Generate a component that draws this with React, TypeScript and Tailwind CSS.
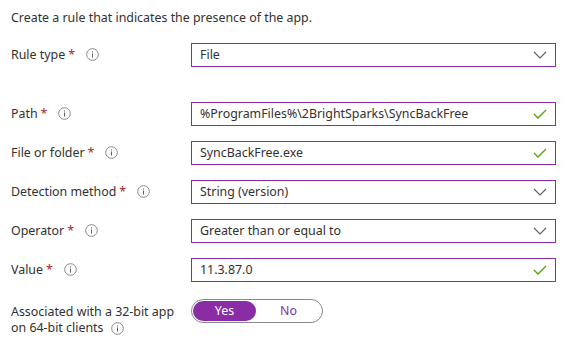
import React from 'react';

const InfoIcon: React.FC = () => (
  <svg width="13" height="13" viewBox="0 0 13 13" className="shrink-0">
    <circle cx="6.5" cy="6.5" r="5.8" fill="none" stroke="#8a8886" strokeWidth="1" />
    <rect x="6" y="5.5" width="1" height="4" fill="#605e5c" />
    <rect x="6" y="3.5" width="1" height="1" fill="#605e5c" />
  </svg>
);

const Chevron: React.FC = () => (
  <svg width="14" height="8" viewBox="0 0 14 8" className="shrink-0">
    <path d="M1 1l6 6 6-6" fill="none" stroke="#605e5c" strokeWidth="1.1" />
  </svg>
);

const Check: React.FC = () => (
  <svg width="14" height="10" viewBox="0 0 14 10" className="shrink-0">
    <path d="M1 5l4 4 8-8" fill="none" stroke="#57a300" strokeWidth="1.3" />
  </svg>
);

type Row = { label: string; value: string; kind: 'select' | 'text' };

const rows: Row[] = [
  { label: 'Path', value: '%ProgramFiles%\\2BrightSparks\\SyncBackFree', kind: 'text' },
  { label: 'File or folder', value: 'SyncBackFree.exe', kind: 'text' },
  { label: 'Detection method', value: 'String (version)', kind: 'select' },
  { label: 'Operator', value: 'Greater than or equal to', kind: 'select' },
  { label: 'Value', value: '11.3.87.0', kind: 'text' },
];

const Label: React.FC<{ text: string }> = ({ text }) => (
  <div className="w-[180px] shrink-0 flex items-center gap-[3px]">
    <span>{text}</span>
    <span className="text-[#a4262c] mr-[8px]">*</span>
    <InfoIcon />
  </div>
);

const Field: React.FC<{ row: Row }> = ({ row }) => (
  <div className="w-[365px] h-[24px] border border-[#8a2da5] flex items-center justify-between pl-[8px] pr-[8px]">
    <span>{row.value}</span>
    {row.kind === 'select' ? <Chevron /> : <Check />}
  </div>
);

const App: React.FC = () => {
  return (
    <div
      className="w-[568px] h-[353px] bg-white text-[#323130] text-[12.4px] pl-[11px] pt-[9px]"
      style={{ fontFamily: '"Segoe UI", "Noto Sans", sans-serif' }}
    >
      <p className="h-[18px] leading-[18px]">Create a rule that indicates the presence of the app.</p>

      <div className="flex items-center mt-[16px]">
        <Label text="Rule type" />
        <Field row={{ label: 'Rule type', value: 'File', kind: 'select' }} />
      </div>

      <div className="flex flex-col gap-[15px] mt-[35px]">
        {rows.map(row => (
          <div key={row.label} className="flex items-center">
            <Label text={row.label} />
            <Field row={row} />
          </div>
        ))}
      </div>

      <div className="flex items-start mt-[17px]">
        <div className="w-[180px] shrink-0 leading-[16px] mt-[5px]">
          <div>Associated with a 32-bit app</div>
          <div className="flex items-center gap-[8px]">
            <span>on 64-bit clients</span>
            <InfoIcon />
          </div>
        </div>
        <div className="w-[132px] h-[24px] rounded-full border border-[#8a8886] flex items-center p-[1px]">
          <div className="w-[63px] h-[20px] rounded-full bg-[#8a2da5] text-white flex items-center justify-center">
            Yes
          </div>
          <div className="flex-1 text-center text-[#8a2da5]">No</div>
        </div>
      </div>
    </div>
  );
};

export default App;
